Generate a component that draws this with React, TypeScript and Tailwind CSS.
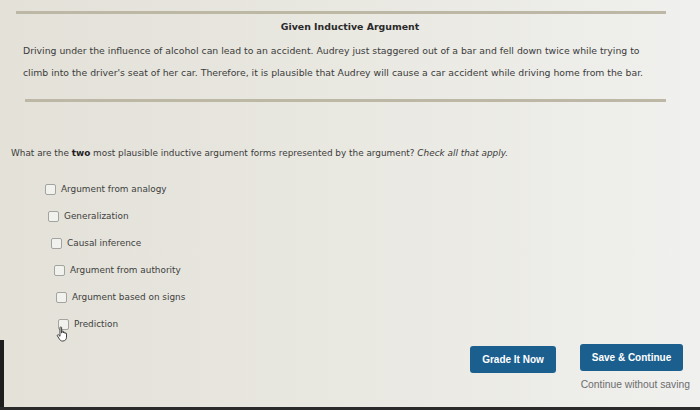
const options = [
  { label: "Argument from analogy", indent: "ml-[45px]" },
  { label: "Generalization", indent: "ml-[48px]" },
  { label: "Causal inference", indent: "ml-[51px]" },
  { label: "Argument from authority", indent: "ml-[54px]" },
  { label: "Argument based on signs", indent: "ml-[56px]" },
  { label: "Prediction", indent: "ml-[58px]" },
]

function HandCursor() {
  return (
    <svg width="14" height="16" viewBox="0 0 14 16" className="absolute left-[-2px] top-[9px]">
      <path
        d="M4 1.5c0-.8 1.6-.8 1.6 0V7l.4-.2V5.6c0-.8 1.5-.8 1.5 0v1.3c0-.8 1.5-.8 1.5 0v.6c0-.7 1.5-.7 1.5.1v3.6c0 2-1.3 3.8-3.6 3.8H6.2c-1.1 0-1.900-.6-2.5-1.5L1.4 9.9c-.5-.8.6-1.6 1.3-.9L4 10.3z"
        fill="#ffffff"
        stroke="#2b2b2b"
        strokeWidth="0.9"
        strokeLinejoin="round"
      />
    </svg>
  )
}

export default function App() {
  return (
    <div className="relative w-[700px] h-[410px] overflow-hidden bg-gradient-to-r from-[#e3e1d8] via-[#e9e8e1] to-[#f0f0ee] font-['DejaVu_Sans',sans-serif] text-[#3b3b3b]">
      <div className="flex flex-col px-[16px] pt-[11px]">
        <div className="h-[3px] bg-[#bdb7a5] mr-[18px]" />
        <h1 className="mt-[6px] text-center text-[9.4px] font-bold text-[#2a2a2a]">Given Inductive Argument</h1>
        <p className="mt-[6px] pl-[7px] text-[9.3px] leading-[22px]">
          Driving under the influence of alcohol can lead to an accident. Audrey just staggered out of a bar and fell down twice while trying to
          <br />
          climb into the driver's seat of her car. Therefore, it is plausible that Audrey will cause a car accident while driving home from the bar.
        </p>
        <div className="mt-[15px] ml-[9px] mr-[18px] h-[3px] bg-[#bdb7a5]" />
      </div>

      <p className="mt-[45px] ml-[11px] text-[8.9px]">
        What are the <span className="font-bold text-[#1f1f1f]">two</span> most plausible inductive argument forms represented by the argument? <span className="italic">Check all that apply.</span>
      </p>

      <ul className="mt-[22px] flex flex-col gap-[13px]">
        {options.map((o) => (
          <li key={o.label} className={`relative flex items-center gap-[5px] h-[14px] ${o.indent}`}>
            <span className="w-[11px] h-[11px] rounded-[2px] border border-[#a3a3a0] bg-[#f1f1ee]" />
            <span className="text-[8.9px] text-[#404040]">{o.label}</span>
            {o.label === "Prediction" && <HandCursor />}
          </li>
        ))}
      </ul>

      <div className="absolute right-[12px] top-[344px] flex flex-col items-end">
        <div className="flex items-start gap-[24px]">
          <button className="mt-[2px] w-[86px] h-[27px] rounded-[3px] bg-[#1b5f8e] text-white text-[10px] font-bold font-['Liberation_Sans',sans-serif]">
            Grade It Now
          </button>
          <button className="mr-[5px] w-[103px] h-[27px] rounded-[3px] bg-[#1b5f8e] text-white text-[10px] font-bold font-['Liberation_Sans',sans-serif]">
            Save &amp; Continue
          </button>
        </div>
        <span className="mt-[4px] mr-[-2px] text-[10.3px] text-[#6d6d6d] font-['Liberation_Sans',sans-serif]">Continue without saving</span>
      </div>

      <div className="absolute left-0 top-[340px] bottom-0 w-[4px] bg-[#1e1e1e]" />
      <div className="absolute left-0 right-0 bottom-0 h-[3px] bg-[#2a2a2a]" />
    </div>
  )
}
